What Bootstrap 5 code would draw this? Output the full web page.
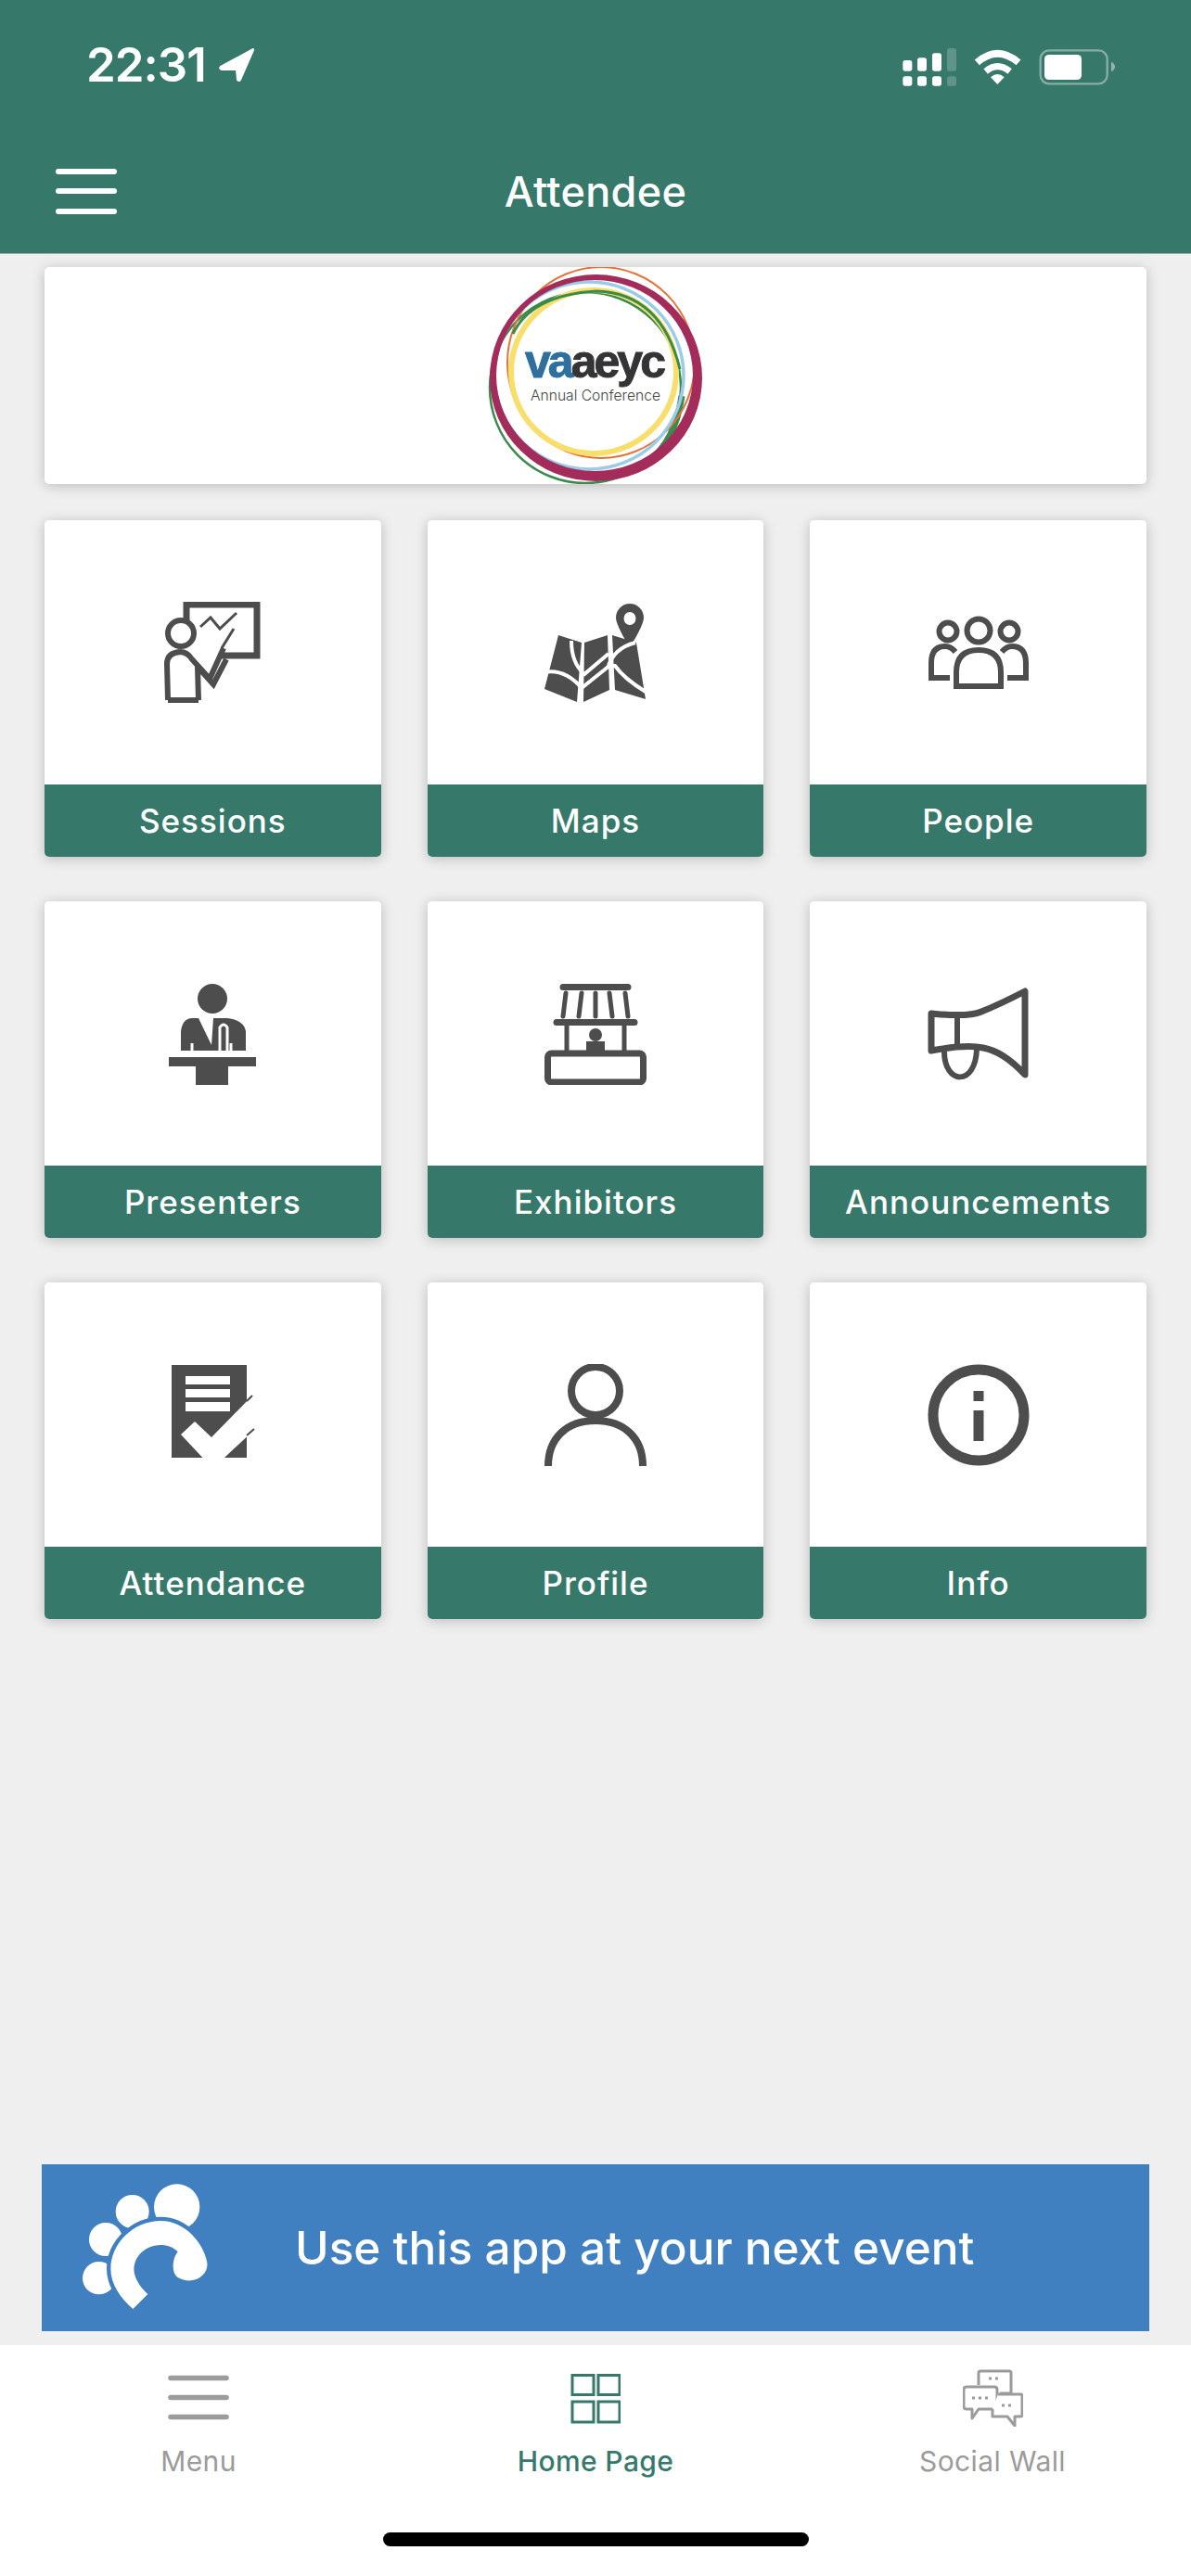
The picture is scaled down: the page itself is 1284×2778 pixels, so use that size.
<!DOCTYPE html>
<html lang="en">
<head>
    <meta charset="UTF-8">
    <title>Attendee</title>
    <link href="https://cdn.jsdelivr.net/npm/bootstrap@5.3.0/dist/css/bootstrap.min.css" rel="stylesheet">
    <style>
        body {
            font-family: Inter, "Liberation Sans", sans-serif;
            background-color: #efefef;
        }
        .top-head {
            background-color: #36796b;
            height: 274px;
            border-bottom: 1px solid #9db8b1;
        }
        .status-row {
            height: 80px;
            margin-top: 30px;
            padding-left: 93px;
            padding-right: 64px;
        }
        .clock {
            font-weight: 600;
            font-size: 51px;
            letter-spacing: -1px;
            margin-right: 13px;
        }
        .title-row {
            height: 100px;
            margin-top: 47px;
            padding: 0 60px;
        }
        .burger, .burger-gap { width: 66px; }
        .burger {
            position: relative;
            top: -1px;
        }
        .burger span {
            display: block;
            height: 6px;
            border-radius: 3px;
            background-color: #fff;
            margin-bottom: 15.5px;
        }
        .burger span:last-child { margin-bottom: 0; }
        .head-title { font-size: 45px; font-weight: 500; letter-spacing: .3px; }
        .page-body { padding: 14px 48px 15px; }
        .logo-card {
            height: 234px;
            margin-bottom: 39px;
            border: 0;
            border-radius: 5px;
            box-shadow: 0 2px 14px rgba(0, 0, 0, .22);
        }
        .tile-row {
            --bs-gutter-x: 50px;
            --bs-gutter-y: 48px;
        }
        .tile {
            height: 363px;
            border: 0;
            border-radius: 5px;
            overflow: hidden;
            box-shadow: 0 2px 14px rgba(0, 0, 0, .22);
        }
        .tile svg { width: 110px; height: 110px; }
        .tile-label {
            height: 78px;
            background-color: #36796b;
            font-size: 35px;
            font-weight: 500;
            letter-spacing: 1px;
        }
        .ad-bar {
            height: 180px;
            margin: 0 -3px;
            background-color: #4080c0;
            padding-left: 15px;
        }
        .ad-bar svg { width: 200px; height: 180px; margin-right: 58px; }
        .ad-text { font-size: 49.5px; font-weight: 500; }
        .bottom-nav { height: 249px; padding-top: 26px; }
        .nav-icon { height: 62px; }
        .nav-label {
            font-size: 30px;
            letter-spacing: .4px;
            line-height: 36px;
            margin-top: 19px;
            color: #9b9b9b;
        }
        .nav-label.is-on { color: #36796b; font-weight: 500; }
        .home-bar {
            width: 459px;
            height: 15px;
            border-radius: 8px;
            background-color: #000;
            margin-top: 59px;
        }
    </style>
</head>
<body class="d-flex flex-column min-vh-100">
    <!-- Header -->
    <header class="top-head text-white">
        <div class="status-row d-flex align-items-center">
            <span class="clock">22:31</span>
            <svg width="40" height="38" viewBox="0 0 40 38"><path d="M38 2 3 21q-2 2 1 3h16l1 11q2 2 3 0L38 3q0-1 0-1z" fill="#fff" stroke="#fff" stroke-width="2" stroke-linejoin="round"/></svg>
            <svg class="ms-auto" width="260" height="80" viewBox="0 0 780 240">
                <g fill="#fff">
                    <rect x="40" y="105" width="30" height="35" rx="8"/>
                    <rect x="87" y="97" width="30" height="43" rx="8"/>
                    <rect x="135" y="82" width="30" height="58" rx="8"/>
                    <rect x="40" y="157" width="30" height="31" rx="8"/>
                    <rect x="87" y="157" width="30" height="31" rx="8"/>
                    <rect x="135" y="157" width="30" height="31" rx="8"/>
                    <g opacity=".2">
                        <rect x="183" y="66" width="30" height="74" rx="8"/>
                        <rect x="183" y="157" width="30" height="31" rx="8"/>
                    </g>
                    <path d="M324 160q22-20 44 0l-22 23z"/>
                    <rect x="498" y="87" width="120" height="81" rx="14"/>
                    <path d="M714 110q12 6 12 16t-12 16z" opacity=".45"/>
                </g>
                <g fill="none" stroke="#fff">
                    <path d="M280 112q66-58 134 0" stroke-width="23"/>
                    <path d="M308 141q38-32 78 0" stroke-width="21"/>
                    <rect x="485" y="73" width="216" height="108" rx="28" stroke-width="7" opacity=".4"/>
                </g>
            </svg>
        </div>
        <div class="title-row d-flex align-items-center">
            <div class="burger"><span></span><span></span><span></span></div>
            <div class="head-title flex-fill text-center">Attendee</div>
            <div class="burger-gap"></div>
        </div>
    </header>

    <!-- Content -->
    <main class="page-body flex-fill d-flex flex-column">
        <div class="card logo-card align-items-center">
            <svg width="235" height="234" viewBox="525 288 235 234">
                <g fill="none">
                    <ellipse cx="631" cy="418" rx="103" ry="103" stroke="#3a8a4c" stroke-width="2.5"/>
                    <path d="M700 497q28-22 35-70" stroke="#3a8a4c" stroke-width="7"/>
                    <ellipse cx="648" cy="391" rx="101" ry="103" stroke="#e4733a" stroke-width="2"/>
                    <ellipse cx="640" cy="401" rx="89" ry="88" stroke="#f8de6b" stroke-width="6"/>
                    <path d="M553 360q20-42 90-46 70 2 90 84" stroke="#3a8a4c" stroke-width="3"/>
                    <ellipse cx="635" cy="405" rx="102" ry="101" stroke="#9ccbe8" stroke-width="3.5"/>
                </g>
                <path fill="#a32c5a" fill-rule="evenodd" d="M528 407.500a114.500 111.500 0 1 0 229 0a114.500 111.500 0 1 0-229 0zM535 405a106 103 0 1 1 212 0a106 103 0 1 1-212 0z"/>
                <text x="566" y="407" font-family="Liberation Sans, sans-serif" font-weight="700" font-size="50" textLength="152" fill="#343436" stroke="#343436" stroke-width="1"><tspan fill="#2e6f9e" stroke="#2e6f9e">va</tspan>aeyc</text>
                <text x="572" y="432" font-family="Inter, sans-serif" font-weight="300" font-size="16" textLength="140" lengthAdjust="spacingAndGlyphs" fill="#444">Annual Conference</text>
            </svg>
        </div>

        <div class="row row-cols-3 tile-row">
            <div class="col">
                <div class="card tile">
                    <div class="flex-fill d-flex align-items-center justify-content-center bg-white">
                        <svg viewBox="0 0 110 110" fill="none" stroke="#4d4d4d">
                            <path d="M27 21V3h76v55H63" stroke-width="7"/>
                            <circle cx="21" cy="34" r="14" stroke-width="6"/>
                            <path d="M7 106 6 67q0-12 14-13 8 0 13 8l19 21 15-33M40 106l-1-36 17 19 14-27" stroke-width="6"/>
                            <path d="M7 106h33" stroke-width="6"/>
                            <path d="M65 50l13-21M42 27 53 17l10 12 18-17" stroke-width="3"/>
                        </svg>
                    </div>
                    <div class="tile-label d-flex align-items-center justify-content-center text-white">Sessions</div>
                </div>
            </div>
            <div class="col">
                <div class="card tile">
                    <div class="flex-fill d-flex align-items-center justify-content-center bg-white">
                        <svg viewBox="0 0 110 110">
                            <g fill="#4d4d4d">
                                <path d="M15 36 0 94l35 14 5-64zM43 44 68 36l2 59-28 13zM73 36l26 8 10 61-33-10z"/>
                                <path fill-rule="evenodd" d="M92 2a15 15 0 0 0-15 15c0 9 15 32 15 32s15-23 15-32A15 15 0 0 0 92 2zm0 9a6.500 7 0 1 1 0 14 6.500 7 0 0 1 0-14z"/>
                            </g>
                            <g fill="none" stroke="#fff" stroke-width="4">
                                <path d="M0 76q22-4 40 17l30-24 6 0q10 14 33 28"/>
                                <path d="M29 42q0 24 14 36l26-22M68 72q6-22 30-28"/>
                            </g>
                        </svg>
                    </div>
                    <div class="tile-label d-flex align-items-center justify-content-center text-white">Maps</div>
                </div>
            </div>
            <div class="col">
                <div class="card tile">
                    <div class="flex-fill d-flex align-items-center justify-content-center bg-white">
                        <svg viewBox="0 0 110 110" fill="none" stroke="#4d4d4d" stroke-width="6">
                            <circle cx="55" cy="31" r="12.500"/>
                            <circle cx="22" cy="32" r="9.500"/>
                            <circle cx="88" cy="32" r="9.500"/>
                            <path d="M31 91V76q0-24 24-24t24 24v15z"/>
                            <path d="M24 82H4V66q0-18 15-18 6 0 11 6M86 82h20V66q0-18-15-18-6 0-11 6"/>
                        </svg>
                    </div>
                    <div class="tile-label d-flex align-items-center justify-content-center text-white">People</div>
                </div>
            </div>
            <div class="col">
                <div class="card tile">
                    <div class="flex-fill d-flex align-items-center justify-content-center bg-white">
                        <svg viewBox="0 0 110 110">
                            <g fill="#4d4d4d">
                                <circle cx="55" cy="17" r="16"/>
                                <path d="M21 73V52q2-14 12-14h7l14 29 2-29h15q18 2 20 14v21z"/>
                                <path d="M8 80h94v10H72v20H37V90H8z"/>
                            </g>
                            <path d="M63 73V48q4-6 8 0v25M33 73v-8M75 73v-8" fill="none" stroke="#fff" stroke-width="3"/>
                        </svg>
                    </div>
                    <div class="tile-label d-flex align-items-center justify-content-center text-white">Presenters</div>
                </div>
            </div>
            <div class="col">
                <div class="card tile">
                    <div class="flex-fill d-flex align-items-center justify-content-center bg-white">
                        <svg viewBox="0 0 110 110" fill="none" stroke="#4d4d4d">
                            <path d="M20 4.500h70M13 42.500h84" stroke-width="7" stroke-linecap="round"/>
                            <path d="M23 11l-3 25M40 11l-3 25M55 11v25M70 11l3 25M87 11l3 25" stroke-width="5" stroke-linecap="round"/>
                            <path d="M24 46v27M86 46v27" stroke-width="5"/>
                            <rect x="3.500" y="76" width="103" height="31" rx="4" stroke-width="7"/>
                            <circle cx="55" cy="56" r="7" fill="#4d4d4d" stroke="none"/>
                            <rect x="45" y="63" width="20" height="12" fill="#4d4d4d" stroke="none"/>
                        </svg>
                    </div>
                    <div class="tile-label d-flex align-items-center justify-content-center text-white">Exhibitors</div>
                </div>
            </div>
            <div class="col">
                <div class="card tile">
                    <div class="flex-fill d-flex align-items-center justify-content-center bg-white">
                        <svg viewBox="0 0 110 110" fill="none" stroke="#4d4d4d" stroke-width="7" stroke-linejoin="round">
                            <path d="M4 33q40 4 54-2 20-8 47-22v90Q82 74 60 70q-18-4-56 3z"/>
                            <path d="M32 33v38" stroke-width="6"/>
                            <path d="M18 74c0 36 34 38 35-3" stroke-width="6"/>
                        </svg>
                    </div>
                    <div class="tile-label d-flex align-items-center justify-content-center text-white">Announcements</div>
                </div>
            </div>
            <div class="col">
                <div class="card tile">
                    <div class="flex-fill d-flex align-items-center justify-content-center bg-white">
                        <svg viewBox="0 0 110 110">
                            <rect x="11" y="1" width="81" height="100" fill="#4d4d4d"/>
                            <path d="M26 13h48v9H26zM26 27h48v9H26zM26 41h48v10H26z" fill="#fff"/>
                            <path d="M21 76 36 62 54 79 98 34 100 71 60.500 108H51z" fill="#fff"/>
                            <path d="M92 40l6-6M92 77l8-7" stroke="#4d4d4d" stroke-width="2"/>
                        </svg>
                    </div>
                    <div class="tile-label d-flex align-items-center justify-content-center text-white">Attendance</div>
                </div>
            </div>
            <div class="col">
                <div class="card tile">
                    <div class="flex-fill d-flex align-items-center justify-content-center bg-white">
                        <svg viewBox="0 0 110 110" fill="none" stroke="#4d4d4d" stroke-width="8">
                            <circle cx="55" cy="29" r="26"/>
                            <path d="M4 110C4 80 24 61 55 61s51 19 51 49"/>
                        </svg>
                    </div>
                    <div class="tile-label d-flex align-items-center justify-content-center text-white">Profile</div>
                </div>
            </div>
            <div class="col">
                <div class="card tile">
                    <div class="flex-fill d-flex align-items-center justify-content-center bg-white">
                        <svg viewBox="0 0 110 110" fill="none" stroke="#4d4d4d">
                            <circle cx="55" cy="55" r="49" stroke-width="11"/>
                            <path d="M55 29v11M55 50v33" stroke-width="11"/>
                        </svg>
                    </div>
                    <div class="tile-label d-flex align-items-center justify-content-center text-white">Info</div>
                </div>
            </div>
        </div>

        <div class="ad-bar d-flex align-items-center text-white mt-auto">
            <svg viewBox="0 12 600 540">
                <g fill="#fff">
                    <circle cx="392" cy="150" r="74"/>
                    <circle cx="248" cy="165" r="54"/>
                    <circle cx="162" cy="255" r="54"/>
                    <circle cx="140" cy="380" r="53"/>
                </g>
                <path d="M250 480 298 432C260 395 235 350 270 305 300 270 360 260 395 295 375 320 375 365 395 378 440 405 495 375 490 330 480 270 420 195 340 195 250 195 178 270 178 350 178 400 210 445 250 480z" fill="#fff" stroke="#4080c0" stroke-width="26" paint-order="stroke"/>
            </svg>
            <span class="ad-text">Use this app at your next event</span>
        </div>
    </main>

    <!-- Bottom tabs -->
    <nav class="bottom-nav bg-white d-flex flex-column align-items-center">
        <div class="row g-0 w-100 text-center">
            <div class="col-4">
                <svg class="nav-icon" width="66" viewBox="0 0 66 62" fill="none" stroke="#9b9b9b" stroke-width="5.500" stroke-linecap="round">
                    <path d="M3 9.500h60M3 30.500h60M3 51.500h60"/>
                </svg>
                <div class="nav-label">Menu</div>
            </div>
            <div class="col-4">
                <svg class="nav-icon" width="54" viewBox="0 0 54 62" fill="none" stroke="#36796b" stroke-width="3">
                    <path d="M2 6.500h23v21H2zM30 6.500h23v21H30zM2 35h23v22H2zM30 35h23v22H30z"/>
                </svg>
                <div class="nav-label is-on">Home Page</div>
            </div>
            <div class="col-4">
                <svg class="nav-icon" width="65" viewBox="0 0 65 62" fill="none" stroke="#9b9b9b" stroke-width="3" stroke-linejoin="round">
                    <path d="M17 17V4q0-2 2-2h31q2 0 2 2v22H40"/>
                    <path d="M4 19h30q3 0 3 3v18q0 3-3 3H17l-7 10v-10H4q-3 0-3-3V22q0-3 3-3z" fill="#fff"/>
                    <path d="M38 27h24q2 0 2 2v20q0 2-2 2h-6v10l-8-10H32v-8" fill="#fff"/>
                    <path d="M28 10h10M10 31h17M42 39h10" stroke-dasharray="3 4" stroke-width="3"/>
                </svg>
                <div class="nav-label">Social Wall</div>
            </div>
        </div>
        <div class="home-bar"></div>
    </nav>

    <script src="https://cdn.jsdelivr.net/npm/bootstrap@5.3.0/dist/js/bootstrap.bundle.min.js"></script>
</body>
</html>
